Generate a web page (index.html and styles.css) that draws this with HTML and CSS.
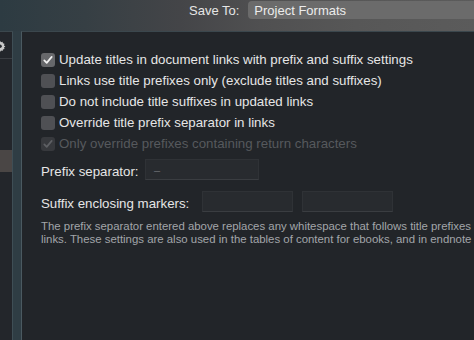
FILE: index.html
```html
<!DOCTYPE html>
<html>
<head>
<meta charset="utf-8">
<link rel="stylesheet" href="styles.css">
</head>
<body>
<div class="window">
  <div class="topbar">
    <span class="save-label">Save To:</span>
    <div class="popup"><span>Project Formats</span></div>
  </div>
  <div class="main">
    <div class="sidebar">
      <div class="side-head">
        <svg class="gear" width="12" height="12" viewBox="0 0 12 12"><path d="M6 0.8l1 1.4 1.6-.5.3 1.6 1.6.5-.5 1.6 1.4 1-1.4 1 .5 1.6-1.6.5-.3 1.6-1.6-.5-1 1.4-1-1.4-1.6.5-.3-1.6-1.6-.5.5-1.6-1.4-1 1.4-1-.5-1.6 1.6-.5.3-1.6 1.6.5z" fill="#c8c8c8"/><circle cx="6" cy="6.3" r="1.8" fill="#24272c"/></svg>
      </div>
      <div class="side-spacer"></div>
      <div class="side-selected"></div>
    </div>
    <div class="panel">
      <div class="checks">
        <div class="row"><span class="cb checked"><svg width="14" height="14" viewBox="0 0 14 14"><path d="M3.3 7.4l2.4 2.5 5-6" fill="none" stroke="#f2f2f2" stroke-width="1.7" stroke-linecap="round" stroke-linejoin="round"/></svg></span><span>Update titles in document links with prefix and suffix settings</span></div>
        <div class="row"><span class="cb"></span><span>Links use title prefixes only (exclude titles and suffixes)</span></div>
        <div class="row"><span class="cb"></span><span>Do not include title suffixes in updated links</span></div>
        <div class="row"><span class="cb"></span><span>Override title prefix separator in links</span></div>
        <div class="row disabled"><span class="cb checked dis"><svg width="14" height="14" viewBox="0 0 14 14"><path d="M3.3 7.4l2.4 2.5 5-6" fill="none" stroke="#5e6064" stroke-width="1.7" stroke-linecap="round" stroke-linejoin="round"/></svg></span><span>Only override prefixes containing return characters</span></div>
      </div>
      <div class="field prefix-field">
        <span class="label">Prefix separator:</span>
        <div class="input prefix-input"><span class="dash">–</span></div>
      </div>
      <div class="field suffix-field">
        <span class="label">Suffix enclosing markers:</span>
        <div class="input suffix-input"></div>
        <div class="input suffix-input"></div>
      </div>
      <p class="note">The prefix separator entered above replaces any whitespace that follows title prefixes<br>links. These settings are also used in the tables of content for ebooks, and in endnote</p>
    </div>
  </div>
</div>
</body>
</html>
```
FILE: styles.css
```css
html, body {
  margin: 0;
  padding: 0;
}
body {
  width: 474px;
  height: 340px;
  overflow: hidden;
  background: #2f3d44;
  font-family: "Liberation Sans", Arial, sans-serif;
  font-size: 13.3px;
  color: #e4e4e4;
}
.window {
  display: flex;
  flex-direction: column;
  height: 340px;
}
.topbar {
  height: 31px;
  flex: none;
  display: flex;
  align-items: flex-start;
  background: linear-gradient(90deg, #2d3b42 0%, #363f44 18%, #444548 38%, #505051 55%, #575757 75%, #5b5b5b 100%);
}
.save-label {
  margin-left: 189px;
  margin-top: 3px;
  color: #e6e6e6;
  font-size: 13px;
}
.popup {
  margin-left: 9px;
  margin-top: 1px;
  height: 18px;
  flex: 1;
  background: #6b6b6b;
  border-radius: 4px 0 0 4px;
  display: flex;
  align-items: center;
  padding-left: 6px;
  color: #ececec;
  font-size: 13px;
}
.main {
  flex: 1;
  display: flex;
  gap: 8px;
  min-height: 0;
}
.sidebar {
  width: 12px;
  flex: none;
  background: #23262b;
  border-top: 1px solid #3b474d;
  border-right: 1px solid #3f4e55;
  display: flex;
  flex-direction: column;
}
.side-head {
  height: 26px;
  border-bottom: 1px solid #3a3d42;
  display: flex;
  align-items: center;
}
.gear {
  margin-left: -6px;
  margin-top: 1px;
}
.side-spacer {
  height: 91px;
}
.side-selected {
  height: 22px;
  background: #4a4645;
}
.panel {
  flex: 1;
  background: #222529;
  border-top: 1px solid #3b474d;
  border-left: 1px solid #4b5a61;
  padding: 17px 0 0 19px;
  overflow: hidden;
}
.checks {
  display: flex;
  flex-direction: column;
}
.row {
  height: 21px;
  display: flex;
  align-items: center;
  gap: 4px;
  white-space: nowrap;
  color: #e6e6e6;
}
.row.disabled {
  color: #56595d;
}
.cb {
  width: 14px;
  height: 14px;
  flex: none;
  border-radius: 3px;
  background: #4f5054;
  display: flex;
}
.cb.checked {
  background: #67686b;
}
.cb.dis {
  background: #37393d;
}
.field {
  display: flex;
  align-items: center;
  white-space: nowrap;
  color: #e6e6e6;
}
.prefix-field {
  margin-top: 5px;
}
.suffix-field {
  margin-top: 11px;
}
.label {
  flex: none;
  padding-top: 3px;
}
.input {
  height: 21px;
  background: #282b2f;
  border: 1px solid #2f3236;
  border-bottom-color: #3a3d41;
  box-sizing: border-box;
  flex: none;
  display: flex;
  align-items: center;
}
.prefix-field .label {
  width: 104px;
}
.suffix-field .label {
  width: 161px;
}
.prefix-input {
  width: 114px;
}
.suffix-input {
  width: 91px;
  margin-right: 9px;
}
.dash {
  color: #6a6d71;
  font-size: 11px;
  margin-left: 8px;
}
.note {
  margin: 8px 0 0 0;
  font-size: 11.4px;
  line-height: 12.5px;
  color: #a2a5a9;
  white-space: nowrap;
}
```
